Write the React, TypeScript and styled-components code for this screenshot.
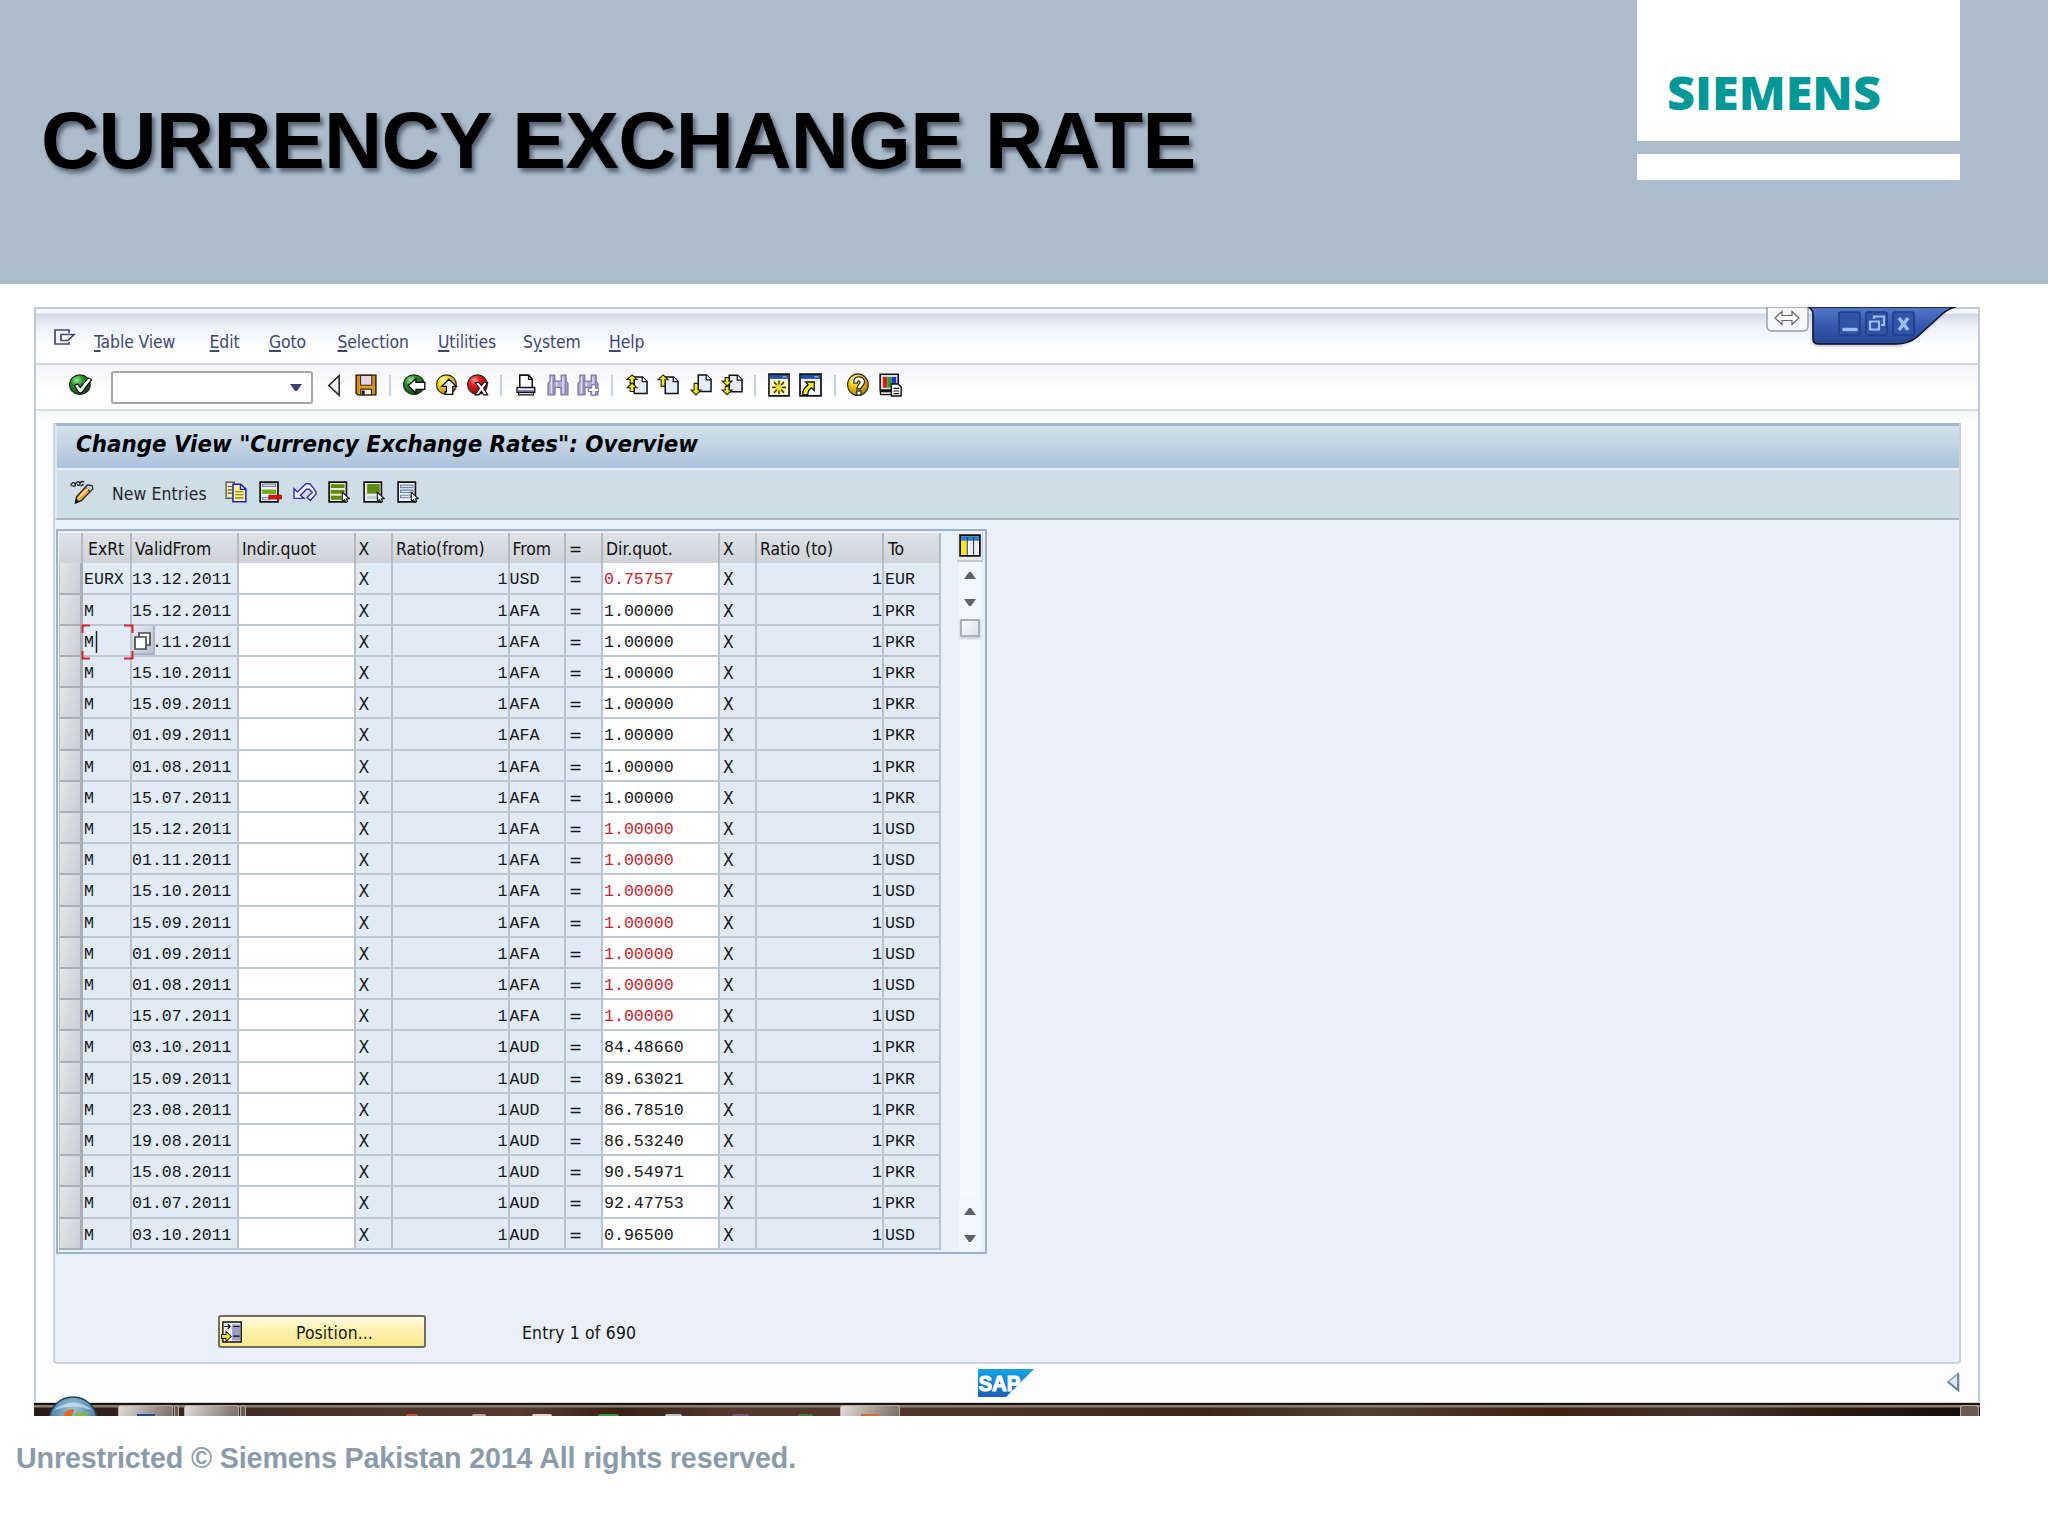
import React from "react";
import styled, { createGlobalStyle, css } from "styled-components";

const ui = `"DejaVu Sans Condensed", "DejaVu Sans", sans-serif`;
const mono = `"Liberation Mono", monospace`;
const arial = `"Liberation Sans", sans-serif`;

const GlobalStyle = createGlobalStyle`
  body { margin: 0; background: #fefefe; }
  * { box-sizing: border-box; }
  svg { display: block; }
`;

const Slide = styled.div`
  width: 2048px;
  height: 1536px;
  overflow: hidden;
  display: flex;
  flex-direction: column;
`;

/* ---------- slide header ---------- */

const Banner = styled.header`
  height: 284px;
  flex: none;
  background: #adbccb;
  display: flex;
  justify-content: space-between;
  padding: 0 88px 0 41px;
`;

const Title = styled.h1`
  margin: 94px 0 0;
  font: bold 80.5px/92px ${arial};
  letter-spacing: -0.65px;
  color: #000;
  white-space: nowrap;
  text-shadow: 3px 4px 4px rgba(50, 60, 75, 0.7);
`;

const Brand = styled.div`
  width: 323px;
  display: flex;
  flex-direction: column;
  gap: 13px;
`;

const BrandBox = styled.div`
  height: 141px;
  background: #fff;
  padding: 60px 0 0 30px;
`;

const BrandBar = styled.div`
  height: 26px;
  background: #fff;
`;

/* ---------- application window ---------- */

const Window = styled.main`
  position: relative;
  margin: 23px 0 0 34px;
  width: 1946px;
  height: 1109px;
  flex: none;
  overflow: hidden;
  display: flex;
  flex-direction: column;
  font-kerning: none;
`;

const Frame = styled.div`
  height: 1096px;
  flex: none;
  border: 2px solid #c3c8d6;
  border-top-width: 2px;
  border-bottom: 3px solid #cfd6d8;
  background: #fdfdfe;
  display: flex;
  flex-direction: column;
`;

const MenuBar = styled.nav`
  height: 56px;
  flex: none;
  border-bottom: 2px solid #d3d5dc;
  background: linear-gradient(#f6f8fe 0 4px, #d0d8e6 5px, #dfe5f1 10px, #eef1fa 18px, #fff 38px);
  display: flex;
  padding: 20px 0 0 18px;
`;

const MenuIcon = styled.span`
  width: 40px;
`;

const MenuItem = styled.span<{ $w: number }>`
  width: ${(p) => p.$w}px;
  font: 17.4px/24px ${ui};
  letter-spacing: -0.1px;
  color: #3c4878;
  white-space: nowrap;
  padding-top: 1px;
  u {
    text-decoration-thickness: 1.5px;
    text-underline-offset: 2px;
  }
`;

const ToolBar = styled.div`
  height: 46px;
  flex: none;
  border-bottom: 2px solid #dcdde2;
  background: linear-gradient(#f5f5f8, #fff 70%);
  display: flex;
  align-items: center;
  padding-bottom: 4px;
`;

const Slot = styled.span<{ $gap: number; $w: number }>`
  margin-left: ${(p) => p.$gap}px;
  width: ${(p) => p.$w}px;
  flex: none;
`;

const Separator = styled.i<{ $gap: number }>`
  margin-left: ${(p) => p.$gap}px;
  width: 2px;
  height: 21px;
  background: #c3d3e6;
`;

const CommandField = styled.div`
  margin: 4px 0 0 19px;
  width: 202px;
  height: 33px;
  border: 2px solid #a5a6a8;
  border-radius: 3px;
  background: #fff;
  display: flex;
  align-items: center;
  justify-content: flex-end;
  padding-right: 8px;
`;

const Body = styled.section`
  flex: 1;
  display: flex;
  flex-direction: column;
  padding: 12px 17px 0 17px;
  background: linear-gradient(#f6f8f8, #fdfdfe 12px);
`;

const Canvas = styled.div`
  height: 941px;
  flex: none;
  background: #ebeff7;
  border: solid #cdd3dc;
  border-width: 0 2px 2px;
  border-radius: 0 0 4px 4px;
  display: flex;
  flex-direction: column;
`;

const TitleBar = styled.h2`
  margin: 0;
  height: 47px;
  flex: none;
  border-top: 3px solid #a7b6c9;
  border-bottom: 2px solid #e5edf4;
  border-left: 2px solid #d9e6f0;
  background: linear-gradient(#d3e1ec, #c0d2e2 50%, #a9c2dc);
  padding: 2px 0 0 19px;
  font: italic bold 23.8px/32px ${ui};
  color: #000;
  white-space: nowrap;
`;

const AppBar = styled.div`
  height: 50px;
  flex: none;
  background: #cfdde7;
  border-bottom: 2px solid #a8b5c3;
  border-left: 2px solid #dfe9f1;
  display: flex;
  align-items: center;
  padding-bottom: 4px;
`;

const AppLabel = styled.span`
  margin-left: 18px;
  width: 113px;
  font: 17.4px/24px ${ui};
  letter-spacing: 0.1px;
  color: #22262c;
  white-space: nowrap;
  padding-top: 3px;
`;

/* ---------- table control ---------- */

const columns = "24px 49px 107px 116.5px 37.5px 116.5px 56.5px 37px 117px 37px 127px 57px";

const Panel = styled.div`
  margin: 9px 0 0 1px;
  width: 931px;
  height: 725px;
  flex: none;
  border: 2px solid #9ab2d0;
  background: #e9f1f9;
  display: flex;
  padding: 2px 0 0 1px;
`;

const Grid = styled.div`
  width: 882px;
  flex: none;
`;

const HeadRow = styled.div`
  display: grid;
  grid-template-columns: ${columns};
  height: 30.4px;
`;

const Head = styled.span<{ $pad?: number }>`
  background: linear-gradient(#dfe3e7, #d5d9dd 60%, #cfd3d8);
  border-right: 2px solid #b4b9c1;
  padding: 4px 0 0 ${(p) => p.$pad ?? 4}px;
  font: 17.4px/24px ${ui};
  color: #111;
  white-space: nowrap;
`;

const Row = styled.div`
  display: grid;
  grid-template-columns: ${columns};
  grid-template-rows: 31.21px;
  height: 31.21px;
`;

const Selector = styled.span`
  border: solid #a9adb6;
  border-width: 0 3px 2px 0;
  border-left: 1px solid #b9bdc4;
  background: linear-gradient(110deg, #e4e6e8, #d6d9dc 50%, #c9ccd4);
`;

const Cell = styled.span<{ $input?: boolean; $right?: boolean; $red?: boolean; $label?: boolean; $pad?: number }>`
  position: relative;
  border-right: 2px solid #b9c2cd;
  border-bottom: 2px solid #bdc8d4;
  background: ${(p) => (p.$input ? "#fff" : "#e0ebf5")};
  color: ${(p) => (p.$red ? "#c8232c" : "#16161c")};
  font: ${(p) => (p.$label ? `17.4px/24px ${ui}` : `16.6px/24px ${mono}`)};
  padding: ${(p) => (p.$label ? 4 : 5)}px 0 0 ${(p) => p.$pad ?? 0}px;
  text-align: ${(p) => (p.$right ? "right" : "left")};
  white-space: nowrap;
`;

const FocusFrame = styled.span`
  position: absolute;
  left: -2px;
  top: -2px;
  width: 54px;
  height: 36px;
  z-index: 2;
`;

const MatchButton = styled.span`
  position: absolute;
  left: 49px;
  top: 0;
  width: 23px;
  height: 29px;
  z-index: 1;
  background: linear-gradient(135deg, #e3eaf3, #b9c4d4);
  border-right: 2px solid #aab3c2;
  border-bottom: 2px solid #aab3c2;
  padding: 6px 0 0 2px;
`;

const ScrollColumn = styled.div`
  flex: 1;
  display: flex;
  flex-direction: column;
  align-items: center;
  padding: 0 3px 0 16px;
`;

const ConfigButton = styled.div`
  height: 29px;
  width: 26px;
  background: #e6e9ee;
  border: solid #c2c6ce;
  border-width: 0 1px 2px 0;
  padding: 1px 0 0 2px;
`;

const ScrollButton = styled.div`
  width: 22px;
  height: 27px;
  background: #f3f6fa;
  display: flex;
  align-items: center;
  justify-content: center;
`;

const Track = styled.div`
  flex: 1;
  width: 20px;
  background: #f7f8fc;
`;

const Thumb = styled.div`
  width: 20px;
  height: 18px;
  margin-top: 3px;
  border: 2px solid #a9b0b8;
  background: linear-gradient(135deg, #fafbfd, #dde2ea);
  box-shadow: 0 2px 2px rgba(120, 130, 145, 0.35);
`;

const FooterRow = styled.div`
  margin: 61px 0 0 163px;
  display: flex;
  align-items: center;
`;

const PositionButton = styled.button`
  width: 208px;
  height: 33px;
  border: 2px solid #6f6e66;
  border-radius: 3px;
  background: linear-gradient(#fffbe0, #fdf1ae 45%, #fbe98f);
  display: flex;
  align-items: center;
  padding: 0 0 0 1px;
  font: 17.4px/24px ${ui};
  letter-spacing: 0.1px;
  color: #1c1a12;
`;

const PositionText = styled.span`
  margin-left: 54px;
  padding-top: 2px;
`;

const EntryCount = styled.span`
  margin-left: 96px;
  padding-top: 3px;
  font: 17.4px/24px ${ui};
  letter-spacing: 0.2px;
  color: #111;
`;

const StatusBar = styled.div`
  height: 38px;
  display: flex;
  align-items: flex-start;
  justify-content: space-between;
  padding: 5px 1px 0 925px;
`;

const StatusToggle = styled.span`
  padding-top: 3px;
`;

const Caption = styled.div`
  position: absolute;
  right: 0;
  top: 0;
  width: 216px;
  height: 46px;
`;

/* ---------- taskbar ---------- */

const TaskBar = styled.div`
  height: 13px;
  flex: none;
  border-top: 2px solid #17110f;
  background: linear-gradient(#8b7d73 0 2px, transparent 3px),
    linear-gradient(90deg, #2a1a17, #4a3029 14%, #573b31 25%, #3a1f16 30%, #55392d 36%, #4c3227 50%, #3d2218 60%, #54402f 68%, #40200f 78%, #47322b 86%, #2c1c12 92%, #140c08);
  display: flex;
`;

const Orb = styled.div`
  position: absolute;
  left: 12px;
  top: 1089px;
`;

const Task = styled.div<{ $gap: number; $w: number; $thin?: boolean; $mark?: string }>`
  margin-left: ${(p) => p.$gap}px;
  width: ${(p) => p.$w}px;
  height: 11px;
  flex: none;
  display: flex;
  align-items: flex-end;
  justify-content: center;
  border: solid #b9aea7;
  border-width: 1px 1px 0;
  border-radius: 3px 3px 0 0;
  ${(p) =>
    p.$thin
      ? css`background: #6b5a52;`
      : css`background: linear-gradient(120deg, #e3dedb, #9d928c 65%, #7b6d66);`}
  &::after {
    content: "";
    width: ${(p) => (p.$mark ? 18 : 0)}px;
    height: 2px;
    background: ${(p) => p.$mark ?? "transparent"};
  }
`;

const Tray = styled.i<{ $gap: number; $w: number; $color: string }>`
  margin-left: ${(p) => p.$gap}px;
  width: ${(p) => p.$w}px;
  height: 2px;
  align-self: flex-end;
  flex: none;
  border-radius: 4px 4px 0 0;
  background: ${(p) => p.$color};
`;

const Copyright = styled.footer`
  margin: 24px 0 0 16px;
  font: bold 28.7px/36px ${arial};
  letter-spacing: -0.15px;
  color: #8b9ba9;
  white-space: nowrap;
`;

/* ---------- icons, drawn on a 16-unit grid ---------- */

const Pix = ({ w = 22, h = 22, box = "0 0 16 16", children }: { w?: number; h?: number; box?: string; children: React.ReactNode }) => (
  <svg width={w} height={h} viewBox={box} fill="none" preserveAspectRatio="none">
    {children}
  </svg>
);

const Ball = ({ id, light, base, dark }: { id: string; light: string; base: string; dark: string }) => (
  <>
    <defs>
      <radialGradient id={id} cx="0.35" cy="0.28" r="0.8">
        <stop offset="0" stopColor={light} />
        <stop offset="0.35" stopColor={base} />
        <stop offset="1" stopColor={dark} />
      </radialGradient>
    </defs>
    <circle cx="7.6" cy="7.8" r="7.2" fill={`url(#${id})`} stroke="#2a2a20" strokeWidth="0.8" />
  </>
);

const CheckIcon = () => (
  <Pix w={23}>
    <Ball id="bCheck" light="#a8e59c" base="#249a2c" dark="#063c0c" />
    <path d="M3.6 8.4 6 7.2l1.8 2.6L13.4 2.8l2.4 1.300L8.800 13.600H7.200z" fill="#fff" stroke="#000" strokeWidth="0.8" />
  </Pix>
);
const BackIcon = () => (
  <Pix w={23}>
    <Ball id="bBack" light="#a8e59c" base="#249a2c" dark="#063c0c" />
    <path d="M3.6 8.4 9 3.4v2.7h6.2v5H9v2.800z" fill="#fff" stroke="#000" strokeWidth="0.9" />
  </Pix>
);
const ExitIcon = () => (
  <Pix>
    <Ball id="bExit" light="#fffbc0" base="#f3dc1c" dark="#b07a05" />
    <path d="M9.4 3.800 14.800 9h-2.600v5.900H6.600V13h1V9H4.200z" fill="#fff" stroke="#000" strokeWidth="0.9" />
  </Pix>
);
const CancelIcon = () => (
  <Pix>
    <Ball id="bCancel" light="#ff9a92" base="#e01a1a" dark="#7c0606" />
    <path d="M6 6.200h2.800l1.700 2.300 1.700-2.300H15l-2.900 4.100 3 4.900h-2.900l-1.800-2.700-1.900 2.700H5.800L9 10.400z" fill="#fff" stroke="#200" strokeWidth="0.8" />
  </Pix>
);
const HelpIcon = () => (
  <Pix w={23} h={24}>
    <Ball id="bHelp" light="#fff8b0" base="#f2cf1c" dark="#a97404" />
    <path d="M4.700 6.600C4.500 3.600 6 2.600 8 2.600s4.200 1 4.200 3.400c0 2.200-2.400 2.600-2.600 4.600H6.800c0-2.800 2.300-3 2.300-4.400 0-1.400-1.900-1.300-1.900.6z" fill="#fff" stroke="#222" strokeWidth="0.8" />
    <rect x="6.800" y="12" width="2.900" height="2.700" fill="#fff" stroke="#222" strokeWidth="0.8" />
  </Pix>
);
const SaveIcon = () => (
  <Pix>
    <path d="M.8.8h14.400v14.400H2L.8 14z" fill="#e8a21e" stroke="#1c1408" />
    <path d="M4 1h8.200v7.200H4z" fill="#e6d3ec" stroke="#3c2a10" strokeWidth=".8" />
    <path d="M4.200 11h7.800v4.200H4.200z" fill="#f6f6f2" stroke="#3c2a10" strokeWidth=".9" />
    <path d="M5 12h2v3H5z" fill="#111" />
    <path d="M2.300 2v12M13.700 2v12" stroke="#c67d0c" strokeWidth=".9" />
  </Pix>
);
const TriangleIcon = ({ blue = false }: { blue?: boolean }) => (
  <Pix w={14} h={blue ? 20 : 23} box="0 0 14 22">
    <path d="M12.200 1.600v18.800L1.800 11z" fill={blue ? "#dbe9f6" : "#eee"} stroke={blue ? "#8ba0b8" : "#222"} strokeWidth="1.5" />
    {blue && <path d="M12.200 2v18L2 11" stroke="#71879f" strokeWidth="2.200" />}
  </Pix>
);
const PrintIcon = () => (
  <Pix w={20}>
    <path d="M3 9.500V.8h7.200L13 3.700v5.800" fill="#fff" stroke="#111" strokeWidth="1.200" />
    <path d="M10 .8v3.100h3" stroke="#111" />
    <path d="M.8 9.800h14.200v3.400H.8z" fill="#f0f0fa" stroke="#111" strokeWidth="1.100" />
    <path d="M1.400 11.600h13v1.200h-13z" fill="#8a86c8" />
    <path d="M2 13.400h12v1.800H2z" fill="#ddd" stroke="#111" />
  </Pix>
);
const FindIcon = ({ more = false }: { more?: boolean }) => (
  <Pix>
    <path d="M2.200.8h3.400v4.400h4.800V.8h3.400v4.400L15.200 7v8.200h-5V9.700H5.800v5.500H.8V7l1.400-1.800z" fill="#b3adD6" stroke="#7f79a4" />
    <path d="M3.200 2v12M11.600 2v12M7 6v3" stroke="#e4e1f2" strokeWidth=".9" />
    <path d="M4.900 2v12.500M13.600 2v12.500" stroke="#8d87b5" strokeWidth="1" />
    {more && <path d="M10.700 7.800h2.700v2.400h2.400v2.700h-2.400v2.500h-2.700v-2.500H8.200v-2.700h2.500z" fill="#fff" stroke="#827ca8" strokeWidth=".9" />}
  </Pix>
);
const Page = ({ x = 6 }: { x?: number }) => (
  <>
    <path d={`M${x} 2.100h6l3.300 3.200v8.800H${x}z`} fill="#e6ebfa" stroke="#111" strokeWidth="1.100" />
    <path d={`M${x + 5.8} 2v3.600h3.400`} fill="#fff" stroke="#111" strokeWidth=".9" />
  </>
);
const arrowStyle = { fill: "#f4ee1a", stroke: "#222", strokeWidth: 0.8 };
const FirstPageIcon = () => (
  <Pix>
    <Page />
    <path d="M4.400.7 8 4H5.800v2.800H3V4H.8z" {...arrowStyle} />
    <path d="M4.400 6.600 8 10H5.800v2.700H3V10H.8z" {...arrowStyle} />
  </Pix>
);
const PrevPageIcon = () => (
  <Pix>
    <Page />
    <path d="M4.400.7 8 4.200H5.800v4.600H3V4.200H.8z" {...arrowStyle} />
  </Pix>
);
const NextPageIcon = () => (
  <Pix>
    <g transform="translate(0 -1.4)"><Page /></g>
    <path d="M4.400 15.200 8 11.600H5.800V6.800H3v4.800H.8z" {...arrowStyle} />
  </Pix>
);
const LastPageIcon = () => (
  <Pix>
    <g transform="translate(0 -1.2)"><Page /></g>
    <path d="M4.400 8.600 8 5.200H5.800V2.600H3v2.600H.8z" {...arrowStyle} />
    <path d="M4.400 15 8 11.600H5.800V9H3v2.600H.8z" {...arrowStyle} />
  </Pix>
);
const WindowIcon = ({ shortcut = false }: { shortcut?: boolean }) => (
  <Pix w={shortcut ? 23 : 22} h={24}>
    <path d="M.7.7h14.600v14.600H.7z" fill={shortcut ? "#eef1f6" : "#fbfad8"} stroke="#111" strokeWidth="1.200" />
    <path d="M1.300 1.300h13.400v2.600H1.300z" fill="#1e50a8" />
    <path d="M10.500 2.500h3" stroke="#9cc3ee" strokeWidth=".8" />
    {shortcut ? (
      <path d="M4.600 6h6v5.600L8.700 9.900c-1.700 1-2.600 2.600-2.600 4.600H2.600c-.2-3.200 1.500-5.200 3.700-6.600z" fill="#f4ee1a" stroke="#111" strokeWidth=".9" />
    ) : (
      <>
        <path d="M8 5v9M3 9.600h10M4.400 6l7.200 7.200M11.600 6l-7.200 7.200" stroke="#e8de18" strokeWidth="2" />
        <path d="M8 5v2.600M8 11.600v2.600M3 9.600h2.600M10.400 9.600H13M4.400 6l2 2M11.600 6l-2 2M4.400 13.200l2-2M11.600 13.200l-2-2" stroke="#222" strokeWidth=".9" />
      </>
    )}
  </Pix>
);
const LayoutIcon = () => (
  <Pix w={23} h={24}>
    <path d="M.8.8h12.600v10.600H.8z" fill="#e3e3ea" stroke="#111" strokeWidth="1.100" />
    <path d="M2.600 2.600h3.200v7.200H2.600z" fill="#d81e1e" />
    <path d="M5.800 2.600h3v7.200h-3z" fill="#23a026" />
    <path d="M8.800 2.600H12v7.200H8.800z" fill="#2234c8" />
    <path d="M1 12.400h8v2H1z" fill="#ddd" stroke="#111" strokeWidth=".9" />
    <path d="M8.600 7.300h4.600l2.200 2v6H8.600z" fill="#fff" stroke="#111" />
    <path d="M10 10.300h4M10 12h4M10 13.700h4" stroke="#111" strokeWidth=".8" />
  </Pix>
);
const PencilIcon = () => (
  <Pix w={24} h={24}>
    <path d="M.6 4.200C.6 1.600 2.600 1.200 3.400 2.600c.6 1.600-1.400 2.400-1.600.8M3.600 3c.4-2 2.400-2.400 3-1 .4 1.600-1.400 2.200-1.600.8M6.700 2C7.400.8 8.600.6 9.400 1.600M7 4.200 9 2.800" stroke="#222" strokeWidth=".9" />
    <path d="M4.400 11.200 11.600 3.400l3 .3.6 2.200-7.600 7.900-4 1.600z" fill="#f2a32c" stroke="#222" strokeWidth=".9" />
    <path d="m11.600 3.400 3 .3.6 2.200-1.800 1.900-3-2.900z" fill="#c9ccd4" stroke="#333" strokeWidth=".7" />
    <path d="m5.800 12 6-6.300" stroke="#fde3a0" strokeWidth="1.200" />
    <path d="m4 12.400 2.200 1.900-2.800 1.200z" fill="#111" />
  </Pix>
);
const CopyIcon = () => (
  <Pix>
    <path d="M.8.9h6v11.600h-6z" fill="#f3ecaa" stroke="#5a5a5a" />
    <path d="M2 4h3M2 6.400h3M2 8.800h3" stroke="#55552e" strokeWidth=".9" />
    <path d="M5.800 2.300h5.600l3.800 3.600v9.200H5.800z" fill="#fbf383" stroke="#1c1cd0" strokeWidth="1.100" />
    <path d="M11.200 2.300v3.800h4" stroke="#1c1cd0" strokeWidth=".9" />
    <path d="M7.400 7.800h6M7.400 10h6M7.400 12.300h6" stroke="#70702a" strokeWidth=".8" />
  </Pix>
);
const DeleteRowIcon = () => (
  <Pix w={23}>
    <path d="M.8.8h12.400v14.400H.8z" fill="#eef1f4" stroke="#111" strokeWidth="1.200" />
    <path d="M2.500 2.300h9v1.600h-9zM2.500 12h5v1.600h-5z" fill="#fff" stroke="#777ba8" strokeWidth=".8" />
    <path d="M2 6.200h10v3.200H2z" fill="#78a81c" />
    <path d="M6.800 10.300h8.900v2.800H6.800z" fill="#e01010" stroke="#8a0a0a" strokeWidth=".5" />
  </Pix>
);
const UndoIcon = () => (
  <Pix w={24}>
    <path d="M.7 5.600v7h6.600L5 10.400 9 6h1.800l2 2.200-3.400 3.800 2.200 2.200 3.800-4.800c.3-1-.6-2.600-1.600-4L11.200 2H8.600L3 8z" fill="#f2f4fc" stroke="#3737b4" strokeWidth="1" />
  </Pix>
);
const Cursor = () => <path d="M10.400 8.200v6.600l1.700-1.300.8 2 1.300-.6-.8-1.900 2.100-.2z" fill="#fff" stroke="#111" strokeWidth=".8" />;
const SelectAllIcon = () => (
  <Pix>
    <path d="M.8.8h12.600v14.400H.8z" fill="#e4eccc" stroke="#111" strokeWidth="1.200" />
    <path d="M2 2.300h10v2.800H2zM2 6.500h10v2.800H2zM2 10.800h8v2.800H2z" fill="#5d8b10" />
    <Cursor />
  </Pix>
);
const SelectBlockIcon = () => (
  <Pix>
    <path d="M.8.8h12.600v14.400H.8z" fill="#e8eaf0" stroke="#111" strokeWidth="1.200" />
    <path d="M3 2.200h9.200v7H3z" fill="#5d8b10" />
    <path d="M3 11.200h7v1.600H3z" fill="#b9c2cc" />
    <Cursor />
  </Pix>
);
const DeselectIcon = () => (
  <Pix>
    <path d="M.8.8h12.600v14.400H.8z" fill="#eff3f7" stroke="#111" strokeWidth="1.200" />
    <path d="M2.600 3h9v1.800h-9zM2.600 6.600h9v1.800h-9zM2.600 10.400h7v1.800h-7z" fill="#dbe6f0" stroke="#6f88a3" strokeWidth=".8" />
    <Cursor />
  </Pix>
);
const ConfigIcon = () => (
  <Pix w={22} h={23}>
    <path d="M.8.8h14.400v14.400H.8z" fill="#fff" stroke="#111" strokeWidth="1.300" />
    <path d="M1.500 1.500h13v3.200h-13z" fill="#2b7cc0" />
    <path d="M1.500 4.800h4v9.600h-4z" fill="#f4e81c" />
    <path d="M7 4.800h3v9.600H7zM11.300 4.800h3v9.600h-3z" fill="#eceef4" />
    <path d="M6 2v12.500M10.600 2v12.500" stroke="#33383f" strokeWidth=".8" />
  </Pix>
);
const PositionIcon = () => (
  <Pix w={21} h={22}>
    <path d="M1.400.8h14v14.400h-14z" fill="#eceef6" stroke="#111" strokeWidth="1.100" />
    <path d="M8.500 2.400h6v11.800h-6z" fill="#9a9cc6" />
    <path d="M2.400 4h4.400M5.200 2.400 6.900 4 5.200 5.700M9.200 4h5M9.200 11h5" stroke="#111" strokeWidth=".9" />
    <path d="M.4 9.800h3.400V7.600l4 3.600-4 3.600v-2.200H.4z" fill="#f4ee1a" stroke="#222" strokeWidth=".8" />
  </Pix>
);
const Caret = ({ up = false, w = 12, h = 7, color = "#5a636f" }: { up?: boolean; w?: number; h?: number; color?: string }) => (
  <svg width={w} height={h} viewBox="0 0 12 7">
    <path d={up ? "M0 7 5 0h2l5 7z" : "M0 0h12L7 7H5z"} fill={color} />
  </svg>
);

const WindowCaption = () => (
  <Caption>
    <svg width="216" height="46" viewBox="0 0 216 46">
      <defs>
        <linearGradient id="capBlue" x1="0" y1="0" x2="0" y2="1">
          <stop offset="0" stopColor="#5478c8" />
          <stop offset="0.5" stopColor="#3459ae" />
          <stop offset="1" stopColor="#274694" />
        </linearGradient>
        <filter id="capShadow" x="-10%" y="-10%" width="120%" height="140%">
          <feGaussianBlur stdDeviation="2" />
        </filter>
      </defs>
      <path d="M3 0v19q0 5 5 5h31q5 0 5-5V0z" fill="#f6f7fa" stroke="#9a9ba0" strokeWidth="1.400" />
      <path d="M11 11l7-6.500v4h10v-4L35 11l-7 6.500v-4H18v4z" fill="#fff" stroke="#666" strokeWidth="1.200" />
      <path d="M50 4v34h85l14-6 30-27z" fill="#333" opacity=".55" filter="url(#capShadow)" />
      <path d="M44 0q5 2 5 8v24q0 5 6 5h76q14 0 22-7l22-20q9-9 17-10z" fill="url(#capBlue)" stroke="#0c1430" strokeWidth="1.600" />
      <g fill="#3054a8" stroke="#203c84" strokeWidth="1.600">
        <rect x="75" y="5" width="21" height="23" rx="2" />
        <rect x="102" y="5" width="21" height="23" rx="2" />
        <rect x="129" y="5" width="21" height="23" rx="2" />
      </g>
      <path d="M78.500 22.500h15" stroke="#9dbcf4" strokeWidth="3.400" />
      <path d="M110 12V9.500h10V18h-3M106 14.500h9v8h-9z" fill="none" stroke="#9dbcf4" strokeWidth="2.200" />
      <path d="m135 11 9 12m0-12-9 12" stroke="#9dbcf4" strokeWidth="3.600" />
    </svg>
  </Caption>
);

const StartOrb = () => (
  <Orb>
    <svg width="54" height="20" viewBox="0 0 54 20">
      <defs>
        <radialGradient id="orb" cx="0.5" cy="0.25" r="0.6">
          <stop offset="0" stopColor="#9cc0d8" />
          <stop offset="0.7" stopColor="#5b8cb0" />
          <stop offset="1" stopColor="#2b5578" />
        </radialGradient>
      </defs>
      <circle cx="27" cy="25" r="24" fill="url(#orb)" stroke="#24445e" strokeWidth="1.600" />
      <path d="M8 14q19-15 38 0-19-7-38 0z" fill="#d3e4ef" opacity=".7" />
      <path d="M17 20q1-6 11-7l-2 7z" fill="#e8652a" />
      <path d="M29 20l1-4q6 2 12 0l-1 4z" fill="#86b83a" />
    </svg>
  </Orb>
);

/* ---------- data ---------- */

type RateEntry = { type: string; date: string; from: string; rate: string; to: string; red?: boolean };

const dates = ["15.12.2011", "01.11.2011", "15.10.2011", "15.09.2011", "01.09.2011", "01.08.2011", "15.07.2011"];
const aud: [string, string, string][] = [
  ["03.10.2011", "84.48660", "PKR"],
  ["15.09.2011", "89.63021", "PKR"],
  ["23.08.2011", "86.78510", "PKR"],
  ["19.08.2011", "86.53240", "PKR"],
  ["15.08.2011", "90.54971", "PKR"],
  ["01.07.2011", "92.47753", "PKR"],
  ["03.10.2011", "0.96500", "USD"],
];
const rows: RateEntry[] = [
  { type: "EURX", date: "13.12.2011", from: "USD", rate: "0.75757", to: "EUR", red: true },
  ...dates.map((date) => ({ type: "M", date, from: "AFA", rate: "1.00000", to: "PKR" })),
  ...dates.map((date) => ({ type: "M", date, from: "AFA", rate: "1.00000", to: "USD", red: true })),
  ...aud.map(([date, rate, to]) => ({ type: "M", date, from: "AUD", rate, to })),
];
const FOCUSED = 2;

const menu: [string, string, string, number][] = [
  ["", "T", "able View", 115.5],
  ["", "E", "dit", 59.5],
  ["", "G", "oto", 68.5],
  ["", "S", "election", 100.5],
  ["", "U", "tilities", 85],
  ["S", "y", "stem", 86],
  ["", "H", "elp", 60],
];

const standardTools: [number, number, React.ReactNode][] = [
  [14, 14, <TriangleIcon />],
  [14, 22, <SaveIcon />],
  [12, 0, null],
  [12, 23, <BackIcon />],
  [10, 22, <ExitIcon />],
  [9, 22, <CancelIcon />],
  [11, 0, null],
  [14, 20, <PrintIcon />],
  [11, 22, <FindIcon />],
  [8, 22, <FindIcon more />],
  [12, 0, null],
  [13, 22, <FirstPageIcon />],
  [9, 22, <PrevPageIcon />],
  [11, 22, <NextPageIcon />],
  [9, 22, <LastPageIcon />],
  [11, 0, null],
  [12, 22, <WindowIcon />],
  [9, 23, <WindowIcon shortcut />],
  [12, 0, null],
  [11, 23, <HelpIcon />],
  [9, 23, <LayoutIcon />],
];

const heads: [string, number][] = [
  ["", 0], ["ExRt", 5], ["ValidFrom", 3], ["Indir.quot", 3], ["X", 3], ["Ratio(from)", 3],
  ["From", 3], ["=", 3], ["Dir.quot.", 3], ["X", 3], ["Ratio (to)", 3], ["To", 4],
];

export default function App() {
  return (
    <Slide>
      <GlobalStyle />
      <Banner>
        <Title>CURRENCY EXCHANGE RATE</Title>
        <Brand>
          <BrandBox>
            <svg width="260" height="72" viewBox="0 0 260 72" overflow="visible">
              <text x="0" y="50" textLength="214" lengthAdjust="spacingAndGlyphs" fill="#009896" fontFamily="'Open Sans', 'Noto Sans', sans-serif" fontWeight="800" fontSize="46">
                SIEMENS
              </text>
            </svg>
          </BrandBox>
          <BrandBar />
        </Brand>
      </Banner>

      <Window>
        <Frame>
          <MenuBar>
            <MenuIcon>
              <svg width="22" height="17" viewBox="0 0 22 17" fill="none" stroke="#3c4878" strokeWidth="1.7">
                <path d="M15 4V1H1v14h14v-2" />
                <path d="M7 5.500h13l-6 6H7z" fill="#fff" />
              </svg>
            </MenuIcon>
            {menu.map(([pre, key, rest, w]) => (
              <MenuItem key={rest} $w={w}>{pre}<u>{key}</u>{rest}</MenuItem>
            ))}
          </MenuBar>
          <ToolBar>
            <Slot $gap={33} $w={23}><CheckIcon /></Slot>
            <CommandField><Caret w={14} h={7} color="#34446e" /></CommandField>
            {standardTools.map(([gap, w, icon], i) =>
              icon ? <Slot key={i} $gap={gap} $w={w}>{icon}</Slot> : <Separator key={i} $gap={gap} />
            )}
          </ToolBar>
          <Body>
            <Canvas>
              <TitleBar>Change View "Currency Exchange Rates": Overview</TitleBar>
              <AppBar>
                <Slot $gap={13} $w={24}><PencilIcon /></Slot>
                <AppLabel>New Entries</AppLabel>
                <Slot $gap={0} $w={22}><CopyIcon /></Slot>
                <Slot $gap={12} $w={23}><DeleteRowIcon /></Slot>
                <Slot $gap={11} $w={24}><UndoIcon /></Slot>
                <Slot $gap={11} $w={22}><SelectAllIcon /></Slot>
                <Slot $gap={13} $w={22}><SelectBlockIcon /></Slot>
                <Slot $gap={12} $w={22}><DeselectIcon /></Slot>
              </AppBar>
              <Panel>
                <Grid>
                  <HeadRow>
                    {heads.map(([label, pad], i) => (
                      <Head key={i} $pad={pad}>{label}</Head>
                    ))}
                  </HeadRow>
                  {rows.map((r, i) => (
                    <Row key={i}>
                      <Selector />
                      <Cell $pad={1}>
                        {r.type}
                        {i === FOCUSED && (
                          <>
                            <FocusFrame>
                              <svg width="54" height="36" viewBox="0 0 54 36" fill="none">
                                <path d="M9 1.500H1.500V9M43 1.500h8.500V9M1.500 27v7.500H9M51.500 27v7.500H43" stroke="#d8232b" strokeWidth="2" />
                                <path d="M15.500 7v22" stroke="#222" strokeWidth="1.500" />
                              </svg>
                            </FocusFrame>
                            <MatchButton>
                              <svg width="17" height="18" viewBox="0 0 17 18" fill="#fff" stroke="#4a4a44" strokeWidth="1.700">
                                <path d="M5 1h11v12H5z" />
                                <path d="M1 5h11v12H1z" />
                              </svg>
                            </MatchButton>
                          </>
                        )}
                      </Cell>
                      <Cell>{r.date}</Cell>
                      <Cell $input />
                      <Cell $label $pad={3}>X</Cell>
                      <Cell $right>1</Cell>
                      <Cell $pad={0}>{r.from}</Cell>
                      <Cell $label $pad={3}>=</Cell>
                      <Cell $input $pad={1} $red={r.red}>{r.rate}</Cell>
                      <Cell $label $pad={3}>X</Cell>
                      <Cell $right>1</Cell>
                      <Cell $pad={1}>{r.to}</Cell>
                    </Row>
                  ))}
                </Grid>
                <ScrollColumn>
                  <ConfigButton><ConfigIcon /></ConfigButton>
                  <ScrollButton><Caret up /></ScrollButton>
                  <ScrollButton><Caret /></ScrollButton>
                  <Track><Thumb /></Track>
                  <ScrollButton><Caret up /></ScrollButton>
                  <ScrollButton><Caret /></ScrollButton>
                </ScrollColumn>
              </Panel>
              <FooterRow>
                <PositionButton>
                  <PositionIcon />
                  <PositionText>Position...</PositionText>
                </PositionButton>
                <EntryCount>Entry 1 of 690</EntryCount>
              </FooterRow>
            </Canvas>
            <StatusBar>
              <svg width="56" height="28" viewBox="0 0 56 28">
                <defs>
                  <linearGradient id="sap" x1="0" y1="0" x2="0" y2="1">
                    <stop offset="0" stopColor="#12a5e6" />
                    <stop offset="1" stopColor="#1f5cb8" />
                  </linearGradient>
                </defs>
                <path d="M0 0h56L28 28H0z" fill="url(#sap)" />
                <text x="0.500" y="22" textLength="42" lengthAdjust="spacingAndGlyphs" fill="#fff" stroke="#fff" strokeWidth="1.100" fontFamily="'Liberation Sans', sans-serif" fontWeight="bold" fontSize="22">
                  SAP
                </text>
              </svg>
              <StatusToggle><TriangleIcon blue /></StatusToggle>
            </StatusBar>
          </Body>
        </Frame>
        <TaskBar>
          <Task $gap={84} $w={55} $mark="#1f4f86" />
          <Task $gap={1} $w={5} $thin />
          <Task $gap={5} $w={55} />
          <Task $gap={1} $w={6} $thin />
          <Tray $gap={160} $w={12} $color="#c4532c" />
          <Tray $gap={54} $w={14} $color="#b7a89f" />
          <Tray $gap={46} $w={20} $color="#e6cfc6" />
          <Tray $gap={46} $w={21} $color="#3f9a2c" />
          <Tray $gap={46} $w={17} $color="#a9c6d6" />
          <Tray $gap={50} $w={17} $color="#6d5a86" />
          <Tray $gap={49} $w={15} $color="#3b7d35" />
          <Task $gap={27} $w={60} $mark="#d96a32" />
          <Task $gap={1060} $w={19} $thin />
        </TaskBar>
        <StartOrb />
        <WindowCaption />
      </Window>

      <Copyright>Unrestricted © Siemens Pakistan 2014 All rights reserved.</Copyright>
    </Slide>
  );
}
